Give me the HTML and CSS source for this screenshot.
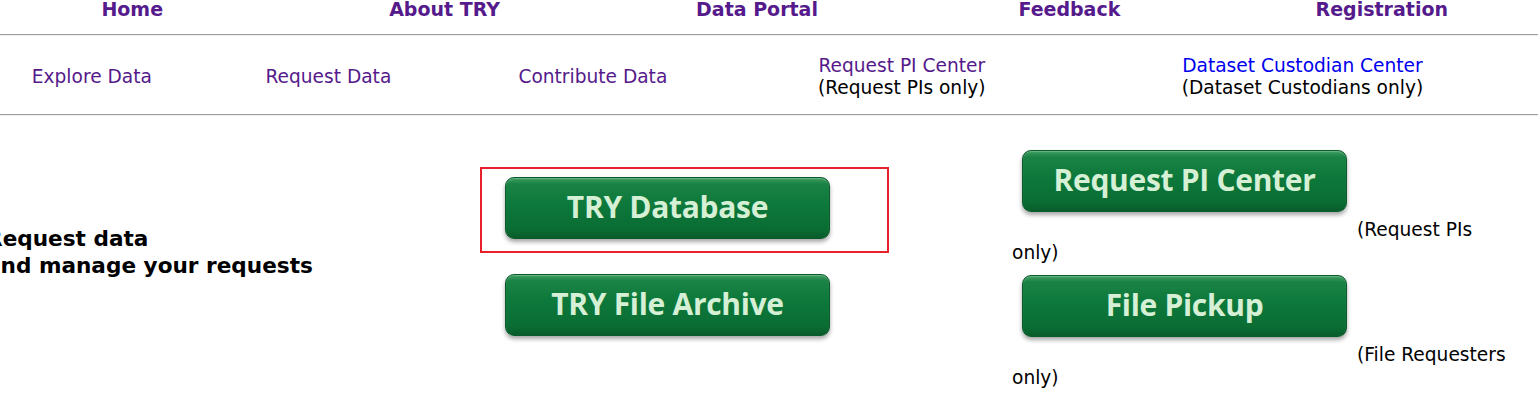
FILE: index.html
```html
<!DOCTYPE html>
<html lang="en">
<head>
<meta charset="utf-8">
<title>TRY Data Portal</title>
<link rel="stylesheet" href="styles.css">
</head>
<body>
<div class="page">
  <nav class="topnav">
    <a href="#">Home</a>
    <a href="#">About TRY</a>
    <a href="#">Data Portal</a>
    <a href="#">Feedback</a>
    <a href="#">Registration</a>
  </nav>
  <div class="rule"></div>
  <nav class="subnav">
    <div class="cell single"><a href="#">Explore Data</a></div>
    <div class="cell single"><a href="#">Request Data</a></div>
    <div class="cell single"><a href="#">Contribute Data</a></div>
    <div class="cell"><a href="#">Request PI Center</a><br><span>(Request PIs only)</span></div>
    <div class="cell"><a href="#" class="fresh">Dataset Custodian Center</a><br><span>(Dataset Custodians only)</span></div>
  </nav>
  <div class="rule"></div>
  <section class="content">
    <div class="intro">Request data<br>and manage your requests</div>
    <div class="middle">
      <div class="highlight"><a href="#" class="btn">TRY Database</a></div>
      <a href="#" class="btn second">TRY File Archive</a>
    </div>
    <div class="right"><a href="#" class="btn inline">Request PI Center</a>(Request PIs only)<br><a href="#" class="btn inline">File Pickup</a>(File Requesters only)</div>
  </section>
</div>
</body>
</html>
```
FILE: styles.css
```css
html, body {
  margin: 0;
  padding: 0;
  background: #ffffff;
  overflow: hidden;
}

body {
  font-family: "DejaVu Sans", Verdana, sans-serif;
  color: #000000;
}

.page {
  width: 1562px;
  margin-left: -24px;
}

/* top navigation */
.topnav {
  display: grid;
  grid-template-columns: repeat(5, minmax(0, 1fr));
  height: 34px;
  box-sizing: border-box;
  font-weight: bold;
  font-size: 19px;
  line-height: 18px;
  text-align: center;
}

.topnav a {
  color: #551a8b;
  text-decoration: none;
}

.rule {
  height: 0;
  border-top: 1px solid #a0a0a0;
  border-bottom: 1px solid #eeeeee;
}

/* sub navigation */
.subnav {
  display: grid;
  grid-template-columns: minmax(0, 120fr) minmax(0, 125fr) minmax(0, 149fr) minmax(0, 171fr) minmax(0, 244fr);
  height: 78px;
  box-sizing: border-box;
  padding-top: 3px;
  align-items: center;
  text-align: center;
  font-size: 18.6px;
  line-height: 22px;
}

.subnav .single {
  padding-top: 1px;
}

.subnav a {
  color: #551a8b;
  text-decoration: none;
}

.subnav a.fresh {
  color: #0000ee;
}

/* content */
.content {
  display: grid;
  grid-template-columns: 504px 532px 505px;
  font-size: 18.6px;
  line-height: 23px;
}

.intro {
  padding: 109px 0 0 10px;
  font-weight: bold;
  font-size: 21.6px;
  line-height: 27px;
}

.middle {
  padding-top: 51px;
}

.highlight {
  width: fit-content;
  border: 2px solid #e8202a;
  padding: 8px 57px 12px 23px;
}

.btn {
  display: block;
  width: 325px;
  height: 62px;
  box-sizing: border-box;
  border: 1px solid #0a5a2b;
  border-radius: 9px;
  background: linear-gradient(to bottom, #3f9e60 0%, #1a8245 10%, #0d783b 45%, #0a6d33 85%, #095c2b 100%);
  box-shadow: 0 3px 4px rgba(0, 0, 0, 0.35), inset 0 1px 1px rgba(255, 255, 255, 0.25);
  color: #d6f0d6;
  font-family: "Open Sans", "DejaVu Sans", sans-serif;
  font-weight: 700;
  font-size: 30px;
  line-height: 58px;
  letter-spacing: -0.3px;
  text-align: center;
  text-decoration: none;
  white-space: nowrap;
}

.btn.second {
  margin: 21px 0 0 25px;
}

.right {
  padding-top: 23px;
}

.btn.inline {
  display: inline-block;
  overflow: hidden;
  vertical-align: baseline;
  margin: 11px 10px 24px 10px;
}
```
